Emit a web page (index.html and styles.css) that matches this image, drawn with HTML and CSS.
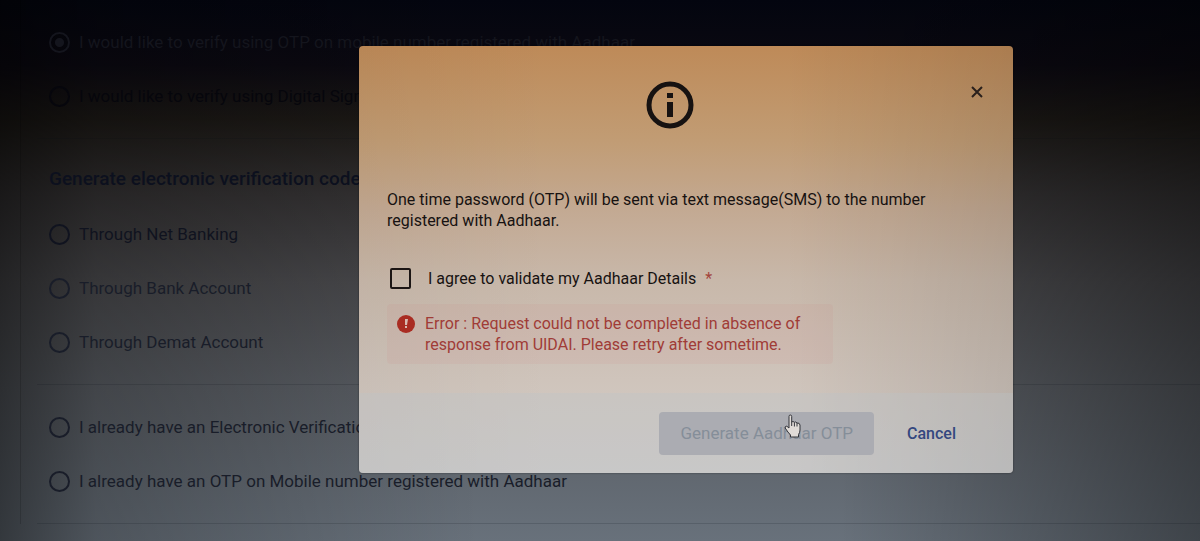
FILE: index.html
```html
<!DOCTYPE html>
<html lang="en">
<head>
    <meta charset="UTF-8">
    <meta name="viewport" content="width=device-width, initial-scale=1.0">
    <title>e-Verify</title>
    <link rel="stylesheet" href="styles.css">
</head>
<body>
    <main class="card">
        <form class="options">
            <div class="group faded">
                <label class="option"><input type="radio" name="method" checked><span>I would like to verify using OTP on mobile number registered with Aadhaar</span></label>
                <label class="option hidden-row"><input type="radio" name="method"><span>I would like to verify using Digital Signature Certificate (DSC)</span></label>
            </div>
            <div class="group">
                <h2>Generate electronic verification code (EVC)</h2>
                <label class="option dim"><input type="radio" name="method"><span>Through Net Banking</span></label>
                <label class="option"><input type="radio" name="method"><span>Through Bank Account</span></label>
                <label class="option"><input type="radio" name="method"><span>Through Demat Account</span></label>
            </div>
            <div class="group">
                <label class="option"><input type="radio" name="method"><span>I already have an Electronic Verification Code (EVC)</span></label>
                <label class="option"><input type="radio" name="method"><span>I already have an OTP on Mobile number registered with Aadhaar</span></label>
            </div>
        </form>
    </main>

    <div class="overlay">
        <div class="dialog" role="dialog" aria-label="Aadhaar OTP">
            <div class="dialog-body">
                <div class="dialog-head">
                    <svg class="info-icon" viewBox="0 0 48 48">
                        <circle cx="24" cy="24" r="21" fill="none" stroke="currentColor" stroke-width="5"/>
                        <rect x="21" y="12" width="6" height="5" fill="currentColor"/>
                        <rect x="21" y="21" width="6" height="15" fill="currentColor"/>
                    </svg>
                    <button class="close" type="button" aria-label="Close">
                        <svg viewBox="0 0 14 14"><path d="M2 2 L12 12 M12 2 L2 12" stroke="currentColor" stroke-width="2"/></svg>
                    </button>
                </div>
                <p class="message">One time password (OTP) will be sent via text message(SMS) to the number registered with Aadhaar.</p>
                <label class="agree"><input type="checkbox"><span>I agree to validate my Aadhaar Details</span><span class="required">*</span></label>
                <div class="error">
                    <svg class="error-icon" viewBox="0 0 18 18">
                        <circle cx="9" cy="9" r="9" fill="#a92c22"/>
                        <path d="M8 4h3l-1 6H8z" fill="#d8b9b0"/>
                        <rect x="8" y="11" width="2" height="2" fill="#d8b9b0"/>
                    </svg>
                    <p>Error : Request could not be completed in absence of response from UIDAI. Please retry after sometime.</p>
                </div>
            </div>
            <div class="dialog-footer">
                <div class="submit-wrap">
                    <button class="submit" type="button" disabled>Generate Aadhaar OTP</button>
                    <svg class="cursor" viewBox="0 0 17 24">
                        <path d="M5 14 L5 2.500 Q5 1 6.300 1 Q7.700 1 7.700 2.500 L7.700 8 Q9 6.800 10.400 8.300 Q11.800 7.300 13 9 Q15.600 8.600 16 11 L16 16 Q16 18.500 14.500 20.500 L14.500 23 L6.500 23 L6.500 21 Q4 18.500 1.200 14 Q0.800 12 2.800 12.200 Z" fill="#e0dbd7" stroke="#33343a" stroke-width="1"/>
                        <path d="M7.700 8v4M10.400 8.500v4M13 9v3.500" fill="none" stroke="#33343a" stroke-width="1"/>
                    </svg>
                </div>
                <button class="cancel" type="button">Cancel</button>
            </div>
        </div>
    </div>
</body>
</html>
```
FILE: styles.css
```css
* {
    box-sizing: border-box;
}

body {
    margin: 0;
    min-height: 100vh;
    overflow-x: hidden;
    font-family: Roboto, Arial, sans-serif;
    font-size: 17px;
    line-height: 21px;
    color: #191d29;
    background:
        linear-gradient(to right, rgba(0, 0, 0, 0.5), rgba(0, 0, 0, 0.25) 8%, rgba(0, 0, 0, 0) 40%, rgba(0, 0, 0, 0) 70%, rgba(0, 0, 0, 0.4)),
        linear-gradient(#03050f, #0b0911 12%, #1b1815 22%, #333132 36%, #48484b 52%, #585c62 72%, #68717b);
}

h2 {
    margin: 0;
    padding: 14px 0 18px;
    font-size: 19px;
    line-height: 21px;
    font-weight: 500;
    color: #0c101e;
}

.card {
    margin-left: 20px;
    padding-left: 16px;
    border-left: 1px solid rgba(0, 0, 0, 0.15);
}

.group {
    padding: 15px 12px;
    border-bottom: 1px solid rgba(10, 12, 20, 0.15);
}

.faded {
    color: #14151d;
}

.option {
    display: flex;
    align-items: center;
    gap: 9px;
    height: 54px;
}

.option input {
    appearance: none;
    width: 21px;
    height: 21px;
    margin: 0;
    border: 2px solid currentColor;
    border-radius: 50%;
    color: inherit;
}

.option input:checked {
    background: radial-gradient(circle, currentColor 4px, transparent 5px);
}

.hidden-row {
    color: #06060c;
}

.dim {
    color: #10131f;
}

/* modal */
.overlay {
    position: absolute;
    top: 0;
    left: 0;
    width: 100%;
    padding: 46px 187px 0 359px;
}

.dialog {
    border-radius: 4px;
    overflow: hidden;
    font-size: 16px;
    color: #171211;
    background:
        linear-gradient(to right, rgba(0, 0, 0, 0.03), rgba(0, 0, 0, 0) 30%, rgba(0, 0, 0, 0) 65%, rgba(0, 0, 0, 0.1)),
        linear-gradient(#be8a58, #c19c74 22%, #c3a992 38%, #c8b8aa 55%, #d0c6be 82%, #cfcac7);
    box-shadow: 0 0 2px rgba(0, 0, 0, 0.5);
}

.dialog-body {
    padding: 35px 28px 29px;
}

.dialog-head {
    position: relative;
    display: flex;
    justify-content: center;
    margin-bottom: 60px;
    padding-right: 32px;
}

.info-icon {
    width: 48px;
    height: 48px;
}

.close {
    position: absolute;
    top: 3px;
    right: 0;
    display: flex;
    padding: 1px;
    border: 0;
    background: none;
    color: #2a201c;
}

.close svg {
    width: 14px;
    height: 14px;
}

.message {
    margin: 0;
}

.agree {
    display: flex;
    align-items: center;
    margin: 37px 0 15px 3px;
}

.agree input {
    appearance: none;
    width: 21px;
    height: 21px;
    margin: 0 17px 0 0;
    border: 2px solid #1b1514;
    border-radius: 2px;
}

.required {
    margin-left: 9px;
    color: #a3453c;
}

.error {
    display: flex;
    gap: 10px;
    width: 446px;
    padding: 9px 24px 9px 10px;
    border-radius: 4px;
    color: #a03c37;
    background: rgba(205, 130, 130, 0.1);
}

.error p {
    margin: 0;
}

.error-icon {
    flex: none;
    width: 18px;
    height: 18px;
    margin-top: 2px;
}

.dialog-footer {
    display: flex;
    justify-content: flex-end;
    align-items: center;
    gap: 33px;
    padding: 19px 57px 18px 28px;
    background: rgba(185, 195, 203, 0.3);
}

.submit-wrap {
    position: relative;
}

button {
    font-family: inherit;
    font-size: 16px;
    line-height: 21px;
    font-weight: 500;
}

.submit {
    padding: 11px 21px;
    border: 0;
    border-radius: 4px;
    font-size: 17px;
    font-weight: 400;
    color: #858e99;
    background: #abacb2;
}

.cursor {
    position: absolute;
    top: 2px;
    left: 125px;
    width: 17px;
    height: 24px;
}

.cancel {
    padding: 0;
    border: 0;
    color: #34477f;
    background: none;
}
```
